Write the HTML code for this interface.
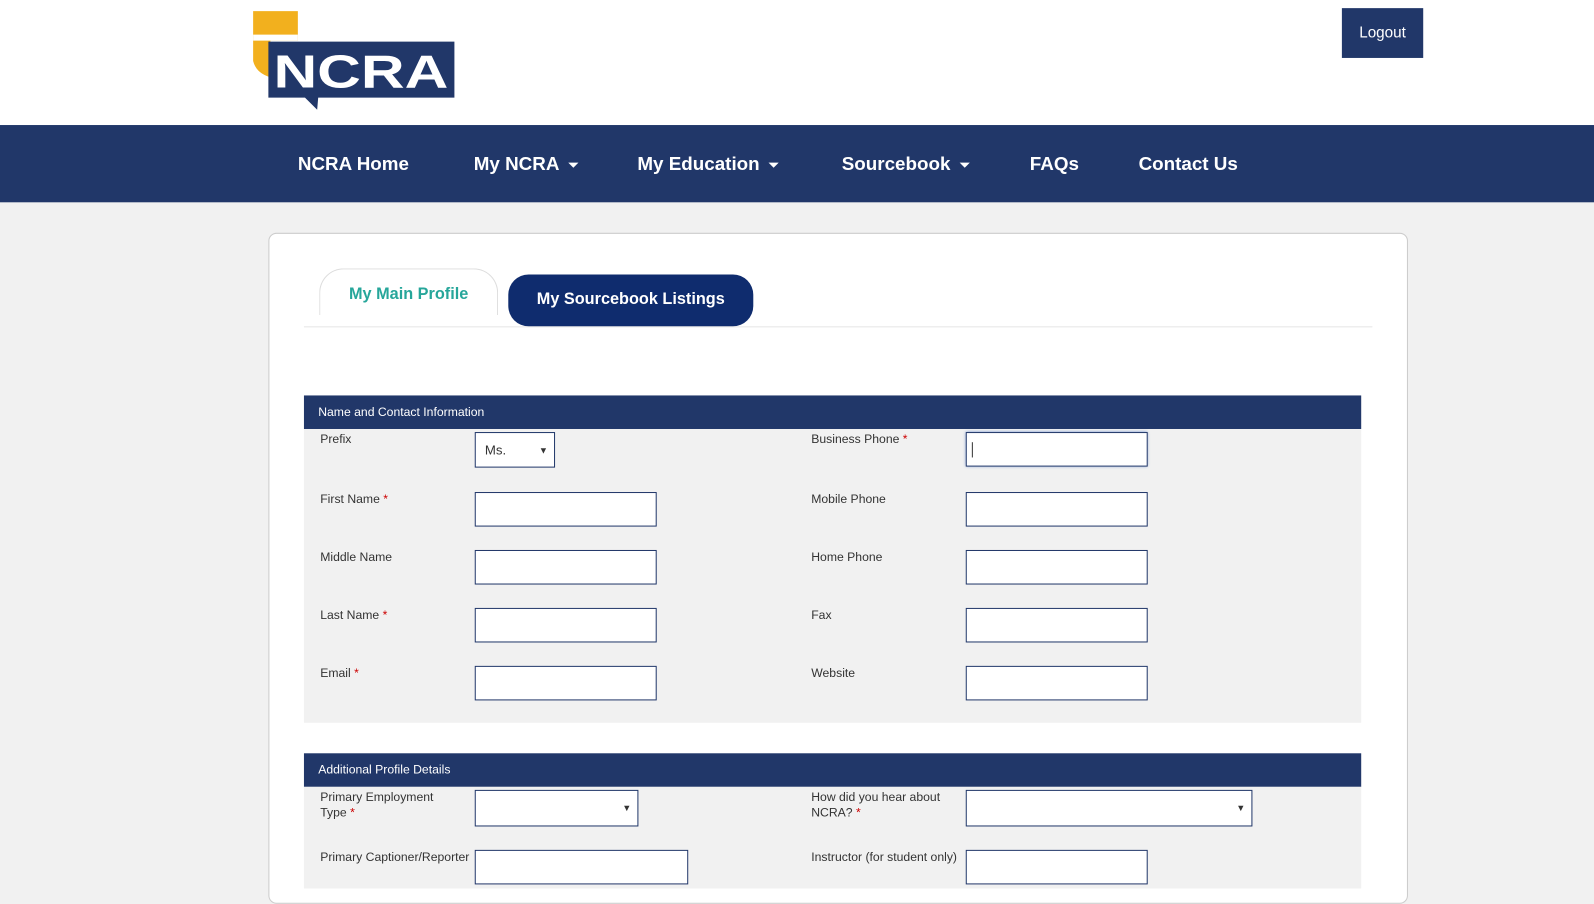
<!DOCTYPE html>
<html><head><meta charset="utf-8"><style>
*{box-sizing:border-box;margin:0;padding:0}
body{width:1594px;height:862px;overflow:hidden;background:#f1f1f1;font-family:"Liberation Sans",Arial,sans-serif;position:relative}
#w{position:absolute;left:0;top:0;width:1568px;height:848px;transform:scale(1.01658);transform-origin:0 0}
.a{position:absolute}
.hdr{left:0;top:0;width:1568px;height:123px;background:#fff}
.nav{left:0;top:123px;width:1568px;height:76px;background:#213769}
.nav span{position:absolute;top:27px;color:#fff;font-weight:bold;font-size:18.5px;white-space:nowrap}
.car{display:inline-block;width:0;height:0;border-left:5px solid transparent;border-right:5px solid transparent;border-top:5px solid #fff;margin-left:9px;vertical-align:middle}
.card{left:264px;top:229px;width:1121px;height:660px;background:#fff;border:1px solid #ccc;border-radius:8px}
.sec{background:#213769;color:#fff;font-size:12px;height:33px;line-height:33px;padding-left:14px;width:1040px;left:299px}
.body{background:#f1f1f1;left:299px;width:1040px}
.lb{font-size:12px;color:#333;line-height:15px}
.lb i{color:#c00;font-style:normal}
.in{background:#fff;border:1px solid #213769;height:34px}
.sel:after{content:"▼";position:absolute;right:6px;top:50%;margin-top:-6px;line-height:12px;font-size:9px;color:#333}
</style></head><body><div id="w">
<div class="a hdr"></div>
<svg class="a" style="left:248px;top:10px" width="200" height="100" viewBox="0 0 200 100">
<path d="M1 1H45V30H18V66Q4 62 1 50Z" fill="#f2b01e"/>
<path d="M1 24H45V30H1Z" fill="#fff"/>
<path d="M16 31H199V86H65L64 98L52 86H16Z" fill="#213769"/>
<text x="21" y="76" font-family="Liberation Sans" font-weight="bold" font-size="46" fill="#fff" textLength="172" lengthAdjust="spacingAndGlyphs">NCRA</text>
</svg>
<div class="a" style="left:1320px;top:8px;width:80px;height:49px;background:#213769;color:#fff;font-size:15px;line-height:49px;text-align:center">Logout</div>
<div class="a nav">
<span style="left:293px">NCRA Home</span>
<span style="left:466px">My NCRA<i class="car"></i></span>
<span style="left:627px">My Education<i class="car"></i></span>
<span style="left:828px">Sourcebook<i class="car"></i></span>
<span style="left:1013px">FAQs</span>
<span style="left:1120px">Contact Us</span>
</div>
<div class="a card"></div>
<div class="a" style="left:314px;top:264px;width:176px;height:46px;border:1px solid #ddd;border-bottom:none;border-radius:24px 24px 0 0;color:#26a69a;font-weight:bold;font-size:16px;text-align:center;line-height:50px;background:#fff">My Main Profile</div>
<div class="a" style="left:500px;top:270px;width:241px;height:51px;background:#0f2c6e;border-radius:20px;color:#fff;font-weight:bold;font-size:16px;text-align:center;line-height:49px">My Sourcebook Listings</div>
<div class="a" style="left:299px;top:321px;width:1051px;height:1px;background:#e5e5e5"></div>

<div class="a sec" style="top:389px">Name and Contact Information</div>
<div class="a body" style="top:422px;height:289px"></div>
<div class="a lb" style="left:315px;top:425px">Prefix</div>
<div class="a in sel" style="left:467px;top:425px;width:79px;height:35px;font-size:13px;line-height:33px;padding-left:9px;color:#333">Ms.</div>
<div class="a lb" style="left:315px;top:484px">First Name <i>*</i></div>
<div class="a in" style="left:467px;top:484px;width:179px"></div>
<div class="a lb" style="left:315px;top:541px">Middle Name</div>
<div class="a in" style="left:467px;top:541px;width:179px"></div>
<div class="a lb" style="left:315px;top:598px">Last Name <i>*</i></div>
<div class="a in" style="left:467px;top:598px;width:179px"></div>
<div class="a lb" style="left:315px;top:655px">Email <i>*</i></div>
<div class="a in" style="left:467px;top:655px;width:179px"></div>

<div class="a lb" style="left:798px;top:425px">Business Phone <i>*</i></div>
<div class="a in" style="left:950px;top:425px;width:179px;box-shadow:0 0 3px #6688cc"><div style="position:absolute;left:5px;top:9px;width:1px;height:15px;background:#333"></div></div>
<div class="a lb" style="left:798px;top:484px">Mobile Phone</div>
<div class="a in" style="left:950px;top:484px;width:179px"></div>
<div class="a lb" style="left:798px;top:541px">Home Phone</div>
<div class="a in" style="left:950px;top:541px;width:179px"></div>
<div class="a lb" style="left:798px;top:598px">Fax</div>
<div class="a in" style="left:950px;top:598px;width:179px"></div>
<div class="a lb" style="left:798px;top:655px">Website</div>
<div class="a in" style="left:950px;top:655px;width:179px"></div>

<div class="a sec" style="top:741px">Additional Profile Details</div>
<div class="a body" style="top:774px;height:100px"></div>
<div class="a lb" style="left:315px;top:777px">Primary Employment<br>Type <i>*</i></div>
<div class="a in sel" style="left:467px;top:777px;width:161px;height:36px"></div>
<div class="a lb" style="left:315px;top:836px">Primary Captioner/Reporter</div>
<div class="a in" style="left:467px;top:836px;width:210px"></div>
<div class="a lb" style="left:798px;top:777px">How did you hear about<br>NCRA? <i>*</i></div>
<div class="a in sel" style="left:950px;top:777px;width:282px;height:36px"></div>
<div class="a lb" style="left:798px;top:836px">Instructor (for student only)</div>
<div class="a in" style="left:950px;top:836px;width:179px"></div>
</div></body></html>
